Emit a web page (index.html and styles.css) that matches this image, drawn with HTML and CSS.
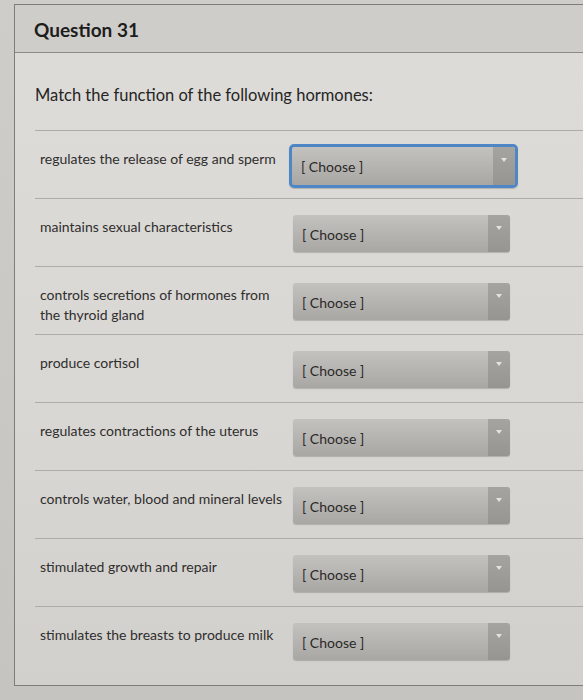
FILE: index.html
```html
<!DOCTYPE html>
<html>
	<head>
		<meta charset="utf-8" />
		<title>Question 31</title>
		<link rel="stylesheet" href="styles.css">
	</head>
	<body>
		<div class="quiz">
			<div class="quiz-header">Question 31</div>
			<div class="quiz-body">
				<p class="prompt">Match the function of the following hormones:</p>
				<div class="answers">
					<div class="row">
						<div class="label">regulates the release of egg and sperm</div>
						<div class="select focus"><span>[ Choose ]</span><i class="arrow"></i></div>
					</div>
					<div class="row">
						<div class="label">maintains sexual characteristics</div>
						<div class="select"><span>[ Choose ]</span><i class="arrow"></i></div>
					</div>
					<div class="row">
						<div class="label">controls secretions of hormones from the thyroid gland</div>
						<div class="select"><span>[ Choose ]</span><i class="arrow"></i></div>
					</div>
					<div class="row">
						<div class="label">produce cortisol</div>
						<div class="select"><span>[ Choose ]</span><i class="arrow"></i></div>
					</div>
					<div class="row">
						<div class="label">regulates contractions of the uterus</div>
						<div class="select"><span>[ Choose ]</span><i class="arrow"></i></div>
					</div>
					<div class="row">
						<div class="label">controls water, blood and mineral levels</div>
						<div class="select"><span>[ Choose ]</span><i class="arrow"></i></div>
					</div>
					<div class="row">
						<div class="label">stimulated growth and repair</div>
						<div class="select"><span>[ Choose ]</span><i class="arrow"></i></div>
					</div>
					<div class="row last">
						<div class="label">stimulates the breasts to produce milk</div>
						<div class="select"><span>[ Choose ]</span><i class="arrow"></i></div>
					</div>
				</div>
			</div>
		</div>
	</body>
</html>
```

FILE: styles.css
```css
html,
body {
	margin: 0;
	padding: 0;
	height: 100%;
}
body {
	background: linear-gradient(180deg, #cfcdca 0%, #c6c4c1 100%);
	font-family: Lato, "Liberation Sans", sans-serif;
	color: #2e2d2c;
	overflow: hidden;
}
.quiz {
	margin: 4px 0 0 14px;
	height: 680px;
	border: 1px solid #7f7d7a;
	border-right: 0;
	background: linear-gradient(180deg, #dedcd9 0%, #d9d7d4 60%, #d2d0cd 100%);
}
.quiz-header {
	height: 47px;
	line-height: 50px;
	padding-left: 19px;
	font-size: 19px;
	font-weight: bold;
	color: #1e1d1c;
	background: #cfcdca;
	border-bottom: 1px solid #8c8a87;
}
.quiz-body {
	padding-left: 20px;
}
.prompt {
	margin: 0;
	padding: 31px 0 24px;
	font-size: 16.5px;
	line-height: 22px;
	color: #262524;
}
.answers {
	border-top: 1px solid #aeaca9;
}
.row {
	display: flex;
	align-items: flex-start;
	height: 67px;
	border-bottom: 1px solid #aeaca9;
	padding-left: 5px;
}
.row.last {
	border-bottom: 0;
}
.label {
	width: 245px;
	margin-right: 8px;
	padding-top: 18px;
	font-size: 14px;
	line-height: 20px;
	color: #2f2e2d;
}
.select {
	position: relative;
	margin-top: 16px;
	width: 217px;
	height: 37px;
	border-radius: 3px;
	background: linear-gradient(180deg, #c4c2bf 0%, #b5b3b0 55%, #a9a7a4 100%);
	box-shadow: 0 1px 1px rgba(0, 0, 0, 0.18);
	font-size: 14px;
	line-height: 40px;
	color: #2a2928;
}
.select span {
	padding-left: 9px;
}
.select.focus {
	margin-top: 13px;
	margin-left: -4px;
	width: 223px;
	height: 38px;
	border: 3px solid #4f86c6;
	border-radius: 5px;
	line-height: 40px;
}
.arrow {
	position: absolute;
	top: 0;
	right: 0;
	bottom: 0;
	width: 22px;
	border-radius: 0 3px 3px 0;
	background: linear-gradient(180deg, #a6a4a1 0%, #979592 100%);
}
.arrow::after {
	content: "";
	position: absolute;
	top: 11px;
	left: 8px;
	border-left: 3px solid transparent;
	border-right: 3px solid transparent;
	border-top: 4px solid #e4e3e1;
}
```
